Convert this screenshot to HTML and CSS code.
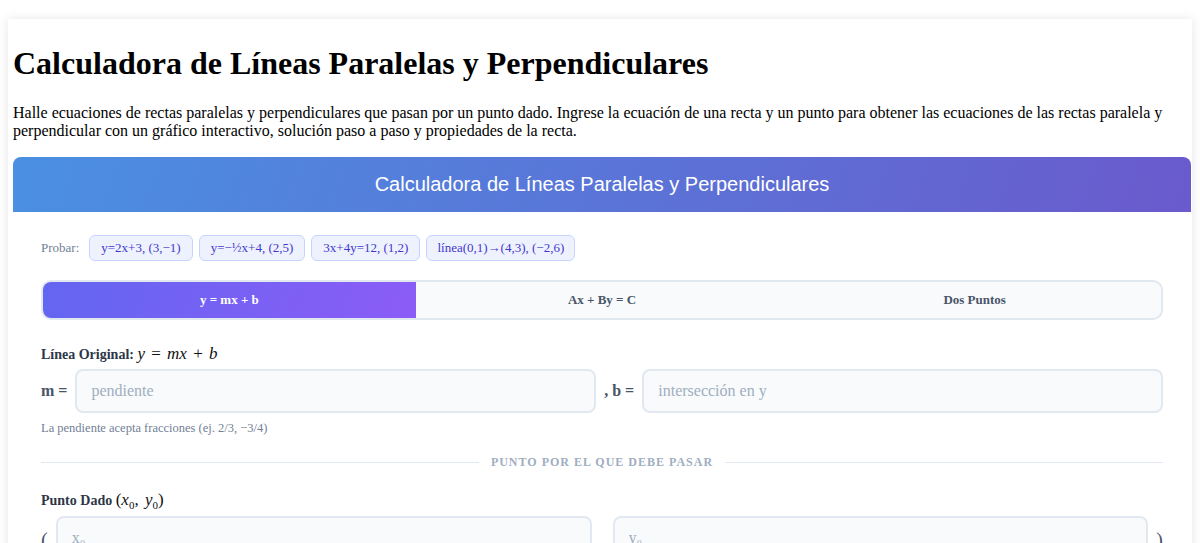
FILE: index.html
```html
<!DOCTYPE html>
<html lang="es">
<head>
<meta charset="utf-8">
<title>Calculadora de Líneas Paralelas y Perpendiculares</title>
<link rel="stylesheet" href="styles.css">
</head>
<body>
<div class="container">
  <h1>Calculadora de Líneas Paralelas y Perpendiculares</h1>
  <p class="intro">Halle ecuaciones de rectas paralelas y perpendiculares que pasan por un punto dado. Ingrese la ecuación de una recta y un punto para obtener las ecuaciones de las rectas paralela y perpendicular con un gráfico interactivo, solución paso a paso y propiedades de la recta.</p>
  <div class="calc">
    <div class="calc-header">Calculadora de Líneas Paralelas y Perpendiculares</div>
    <div class="calc-body">
      <div class="examples">
        <span class="ex-label">Probar:</span>
        <button class="chip">y=2x+3, (3,−1)</button>
        <button class="chip">y=−½x+4, (2,5)</button>
        <button class="chip">3x+4y=12, (1,2)</button>
        <button class="chip">línea(0,1)→(4,3), (−2,6)</button>
      </div>
      <div class="tabs">
        <button class="tab active">y = mx + b</button>
        <button class="tab">Ax + By = C</button>
        <button class="tab">Dos Puntos</button>
      </div>
      <div class="field-label">Línea Original: <span class="math"><i>y</i> = <i>mx</i> + <i>b</i></span></div>
      <div class="input-row">
        <span class="op">m =</span>
        <input class="inp" type="text" placeholder="pendiente">
        <span class="op">, b =</span>
        <input class="inp" type="text" placeholder="intersección en y">
      </div>
      <div class="hint">La pendiente acepta fracciones (ej. 2/3, −3/4)</div>
      <div class="divider"><span>Punto por el que debe pasar</span></div>
      <div class="field-label point-label">Punto Dado <span class="math">(<i>x</i><sub>0</sub>, <i>y</i><sub>0</sub>)</span></div>
      <div class="input-row point-row">
        <span class="paren">(</span>
        <input class="inp" type="text" placeholder="x₀">
        <span class="comma">,</span>
        <input class="inp" type="text" placeholder="y₀">
        <span class="paren">)</span>
      </div>
    </div>
  </div>
</div>
</body>
</html>
```
FILE: styles.css
```css
html, body {
  margin: 0;
  background: #ffffff;
}
body {
  padding: 19px 8px 0;
  font-family: "Liberation Serif", "Times New Roman", serif;
  color: #000;
}
.container {
  padding: 5px 1px 5px 5px;
  box-shadow: 0 0 10px rgba(0, 0, 0, 0.1);
  background: #fff;
}
h1 {
  font-size: 32px;
  font-weight: bold;
  margin: 21.44px 0;
}
.intro {
  font-size: 16px;
  margin: 16px 0;
}
.calc {
  margin-top: 17px;
  border-radius: 8px 8px 0 0;
  background: #fff;
}
.calc-header {
  background: linear-gradient(110deg, #4a90e2 0%, #6a5acd 100%);
  color: #fff;
  font-family: "Liberation Sans", Arial, sans-serif;
  font-size: 20px;
  line-height: 23px;
  text-align: center;
  padding: 16px 0;
  border-radius: 8px 8px 0 0;
}
.calc-body {
  padding: 23px 28px 28px;
}
.examples {
  display: flex;
  align-items: center;
  gap: 6px;
}
.ex-label {
  font-size: 13px;
  color: #718096;
  margin-right: 4px;
}
.chip {
  margin: 0;
  font-family: "Liberation Serif", "Times New Roman", serif;
  font-size: 13px;
  color: #4338ca;
  background: #eef2ff;
  border: 1px solid #c7d2fe;
  border-radius: 6px;
  height: 26px;
  padding: 0 11px;
  cursor: pointer;
}
.chip:last-child {
  padding: 0 10px;
}
.tabs {
  margin-top: 19px;
  display: flex;
  border: 2px solid #e2e8f0;
  border-radius: 10px;
  background: #f8fafc;
  overflow: hidden;
}
.tab {
  flex: 1;
  margin: 0;
  height: 36px;
  border: 0;
  background: transparent;
  font-family: "Liberation Serif", "Times New Roman", serif;
  font-size: 13px;
  font-weight: bold;
  color: #4a5568;
}
.tab.active {
  background: linear-gradient(110deg, #6366f1 0%, #8b5cf6 100%);
  color: #fff;
}
.field-label {
  margin-top: 25px;
  font-size: 14px;
  font-weight: bold;
  color: #2d3748;
  line-height: 20px;
}
.math {
  font-family: "Liberation Serif", "Times New Roman", serif;
  font-weight: normal;
  font-size: 17px;
  line-height: 1;
  color: #111;
  word-spacing: 2px;
}
.math i {
  font-style: italic;
}
.math sub {
  font-size: 11px;
  line-height: 1;
}
.input-row {
  margin-top: 4px;
  display: flex;
  align-items: center;
  gap: 8px;
}
.op {
  font-size: 16px;
  font-weight: bold;
  color: #4a5568;
  white-space: nowrap;
}
.inp {
  flex: 1;
  min-width: 0;
  margin: 0;
  height: 44px;
  box-sizing: border-box;
  border: 2px solid #e2e8f0;
  border-radius: 8px;
  background: #f8fafc;
  padding: 0 14px;
  font-family: "Liberation Serif", "Times New Roman", serif;
  font-size: 16px;
  color: #2d3748;
}
.inp::placeholder {
  color: #a0aec0;
}
.hint {
  margin-top: 8px;
  font-size: 12.5px;
  color: #718096;
}
.divider {
  margin-top: 19px;
  display: flex;
  align-items: center;
  gap: 12px;
}
.divider::before, .divider::after {
  content: "";
  flex: 1;
  height: 1px;
  background: #e2e8f0;
}
.divider span {
  font-size: 12px;
  font-weight: bold;
  letter-spacing: 1px;
  text-transform: uppercase;
  color: #a0aec0;
}
.point-label {
  margin-top: 21px;
}
.point-row {
  margin-top: 5px;
  gap: 8px;
  align-items: flex-end;
}
.paren, .comma {
  font-size: 20px;
  color: #4a5568;
  line-height: 40px;
}
```
